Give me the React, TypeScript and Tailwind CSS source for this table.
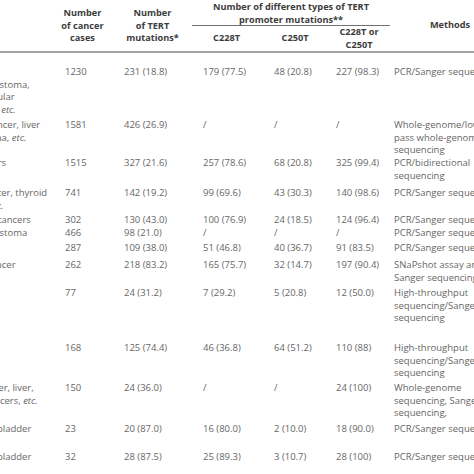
import React from "react";

// One row of the TERT table: left-column lines, counts, and method lines.
type Row = {
  h: string;
  type: string[];
  cases: string;
  tert: string;
  c228: string;
  c250: string;
  either: string;
  methods: string[];
};

const ROWS: Row[] = [
  {
    h: "h-[53px]",
    type: ["Glioma,", "Medulloblastoma,", "Hepatocellular", "carcinoma, etc."],
    cases: "1230",
    tert: "231 (18.8)",
    c228: "179 (77.5)",
    c250: "48 (20.8)",
    either: "227 (98.3)",
    methods: ["PCR/Sanger sequencing"],
  },
  {
    h: "h-[38px]",
    type: ["Bladder cancer, liver", "glioblastoma, etc."],
    cases: "1581",
    tert: "426 (26.9)",
    c228: "/",
    c250: "/",
    either: "/",
    methods: ["Whole-genome/low-", "pass whole-genome", "sequencing"],
  },
  {
    h: "h-[30px]",
    type: ["Solid tumors"],
    cases: "1515",
    tert: "327 (21.6)",
    c228: "257 (78.6)",
    c250: "68 (20.8)",
    either: "325 (99.4)",
    methods: ["PCR/bidirectional", "sequencing"],
  },
  {
    h: "h-[27px]",
    type: ["Breast cancer, thyroid", "cancers, etc."],
    cases: "741",
    tert: "142 (19.2)",
    c228: "99 (69.6)",
    c250: "43 (30.3)",
    either: "140 (98.6)",
    methods: ["PCR/Sanger sequencing"],
  },
  {
    h: "h-[13px]",
    type: ["Urological cancers"],
    cases: "302",
    tert: "130 (43.0)",
    c228: "100 (76.9)",
    c250: "24 (18.5)",
    either: "124 (96.4)",
    methods: ["PCR/Sanger sequencing"],
  },
  {
    h: "h-[15px]",
    type: ["Medulloblastoma"],
    cases: "466",
    tert: "98 (21.0)",
    c228: "/",
    c250: "/",
    either: "/",
    methods: ["PCR/Sanger sequencing"],
  },
  {
    h: "h-[17px]",
    type: ["Glioma"],
    cases: "287",
    tert: "109 (38.0)",
    c228: "51 (46.8)",
    c250: "40 (36.7)",
    either: "91 (83.5)",
    methods: ["PCR/Sanger sequencing"],
  },
  {
    h: "h-[28px]",
    type: ["Thyroid cancer"],
    cases: "262",
    tert: "218 (83.2)",
    c228: "165 (75.7)",
    c250: "32 (14.7)",
    either: "197 (90.4)",
    methods: ["SNaPshot assay and", "Sanger sequencing"],
  },
  {
    h: "h-[55px]",
    type: ["Melanoma"],
    cases: "77",
    tert: "24 (31.2)",
    c228: "7 (29.2)",
    c250: "5 (20.8)",
    either: "12 (50.0)",
    methods: ["High-throughput", "sequencing/Sanger", "sequencing"],
  },
  {
    h: "h-[40px]",
    type: ["Sarcoma"],
    cases: "168",
    tert: "125 (74.4)",
    c228: "46 (36.8)",
    c250: "64 (51.2)",
    either: "110 (88)",
    methods: ["High-throughput", "sequencing/Sanger", "sequencing"],
  },
  {
    h: "h-[41px]",
    type: ["Colon cancer, liver,", "thyroid cancers, etc."],
    cases: "150",
    tert: "24 (36.0)",
    c228: "/",
    c250: "/",
    either: "24 (100)",
    methods: ["Whole-genome", "sequencing, Sanger", "sequencing,"],
  },
  {
    h: "h-[28px]",
    type: ["Pelvis and bladder"],
    cases: "23",
    tert: "20 (87.0)",
    c228: "16 (80.0)",
    c250: "2 (10.0)",
    either: "18 (90.0)",
    methods: ["PCR/Sanger sequencing"],
  },
  {
    h: "h-[30px]",
    type: ["Pelvis and bladder"],
    cases: "32",
    tert: "28 (87.5)",
    c228: "25 (89.3)",
    c250: "3 (10.7)",
    either: "28 (100)",
    methods: ["PCR/Sanger sequencing"],
  },
];

const COLS = "grid grid-cols-[105px_55px_85px_63px_74px_54px_128px]";

// italicise "etc." the way the journal table does
function Line({ text }: { text: string }) {
  const i = text.indexOf("etc.");
  if (i < 0) return <div>{text}</div>;
  return (
    <div>
      {text.slice(0, i)}
      <span className="italic">etc.</span>
      {text.slice(i + 4)}
    </div>
  );
}

export default function App() {
  return (
    <div className="w-[474px] h-[474px] overflow-hidden bg-white font-['Open_Sans','Lato',sans-serif]">
      <div className="ml-[-50px] w-[564px]">
        {/* Header */}
        <div className={`${COLS} grid-rows-[26px_25px] border-b-2 border-[#a3a3a3] font-bold text-[9.2px] text-[#3d3d3d] leading-[12.5px]`}>
          <div className="row-span-2" />
          <div className="row-span-2 flex items-center justify-center text-center pt-[1px]">
            <div>
              Number
              <br />
              of cancer
              <br />
              cases
            </div>
          </div>
          <div className="row-span-2 flex items-center justify-center text-center pt-[1px]">
            <div>
              Number
              <br />
              of TERT
              <br />
              mutations*
            </div>
          </div>
          <div className="col-span-3 ml-[-3px] mr-[-4px] border-b border-[#707070] text-center leading-[13px]">
            Number of different types of TERT
            <br />
            promoter mutations**
          </div>
          <div className="row-span-2 flex items-center justify-center">Methods</div>
          <div className="flex items-center justify-center">C228T</div>
          <div className="flex items-center justify-center">C250T</div>
          <div className="flex items-center justify-center text-center">
            <div>
              C228T or
              <br />
              C250T
            </div>
          </div>
        </div>

        {/* Body */}
        <div className="pt-[13px] text-[9.5px] text-[#666666] leading-[12.5px]">
          {ROWS.map((r, idx) => (
            <div key={idx} className={`${COLS} ${r.h}`}>
              <div className="whitespace-nowrap">
                {r.type.map((t, k) => (
                  <Line key={k} text={t} />
                ))}
              </div>
              <div className="pl-[10px]">{r.cases}</div>
              <div className="pl-[14px] whitespace-nowrap">{r.tert}</div>
              <div className="pl-[8px] whitespace-nowrap">{r.c228}</div>
              <div className="pl-[16px] whitespace-nowrap">{r.c250}</div>
              <div className="pl-[4px] whitespace-nowrap">{r.either}</div>
              <div className="pl-[8px] whitespace-nowrap">
                {r.methods.map((m, k) => (
                  <div key={k}>{m}</div>
                ))}
              </div>
            </div>
          ))}
        </div>
      </div>
    </div>
  );
}
